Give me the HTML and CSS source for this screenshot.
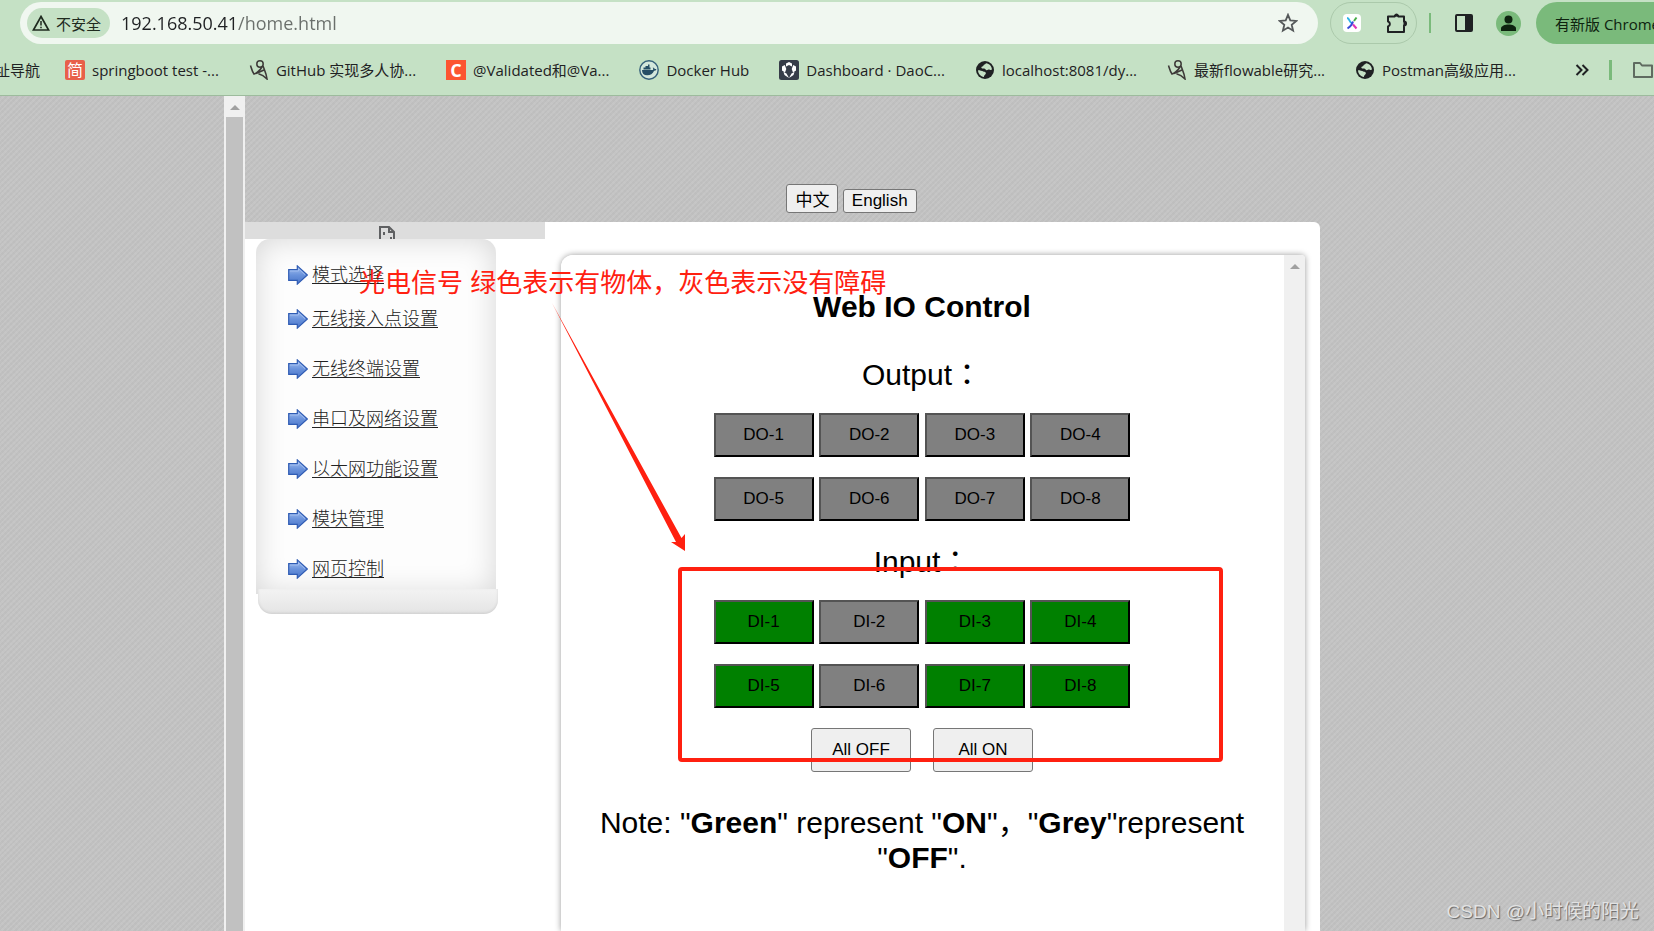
FILE: index.html
```html
<!DOCTYPE html>
<html lang="zh-CN">
<head>
    <meta charset="UTF-8">
    <meta name="viewport" content="width=device-width, initial-scale=1.0">
    <title>Web IO Control</title>
    <link rel="stylesheet" href="styles.css">
</head>
<body>

    <!-- Shared icons -->
    <svg class="sprite" aria-hidden="true">
        <defs>
            <linearGradient id="arrow-fill" x1="0" y1="0" x2="0" y2="1">
                <stop offset="0" stop-color="#a9c3f0"/>
                <stop offset="0.5" stop-color="#6a93dc"/>
                <stop offset="1" stop-color="#4a74c8"/>
            </linearGradient>
            <symbol id="arrow" viewBox="0 0 20 20">
                <path d="M.7 4.7h8.6V.9L19.3 10 9.3 19.1v-3.8H.7z" fill="url(#arrow-fill)" stroke="#2f5cb4" stroke-width="1.2"/>
                <path d="M2 6h8.5V3.6l6.6 6.2" fill="none" stroke="#9fbcf0" stroke-width="1"/>
            </symbol>
            <symbol id="globe" viewBox="0 0 20 20">
                <circle cx="10" cy="10" r="9" fill="#1f2123"/>
                <path d="M11 3.200c-.5 1.300-2.300 1-2.500 2.300-.2 1.200-2 .6-2.200 2-.1 1 1.500 1 2.700 1 1.600 0 1.400 1.700 2.700 1.700 1.200 0 1.900-.9 3-.5.8.3 1.500.2 2.300-.1-.2-3.300-2.600-6-6-6.400zM3 10.200c.1 3.500 2.600 6.300 6 6.800-.1-1.200.3-1.700 1-2.300.7-.7 1.200-1.300.6-2.200-.6-.8-1.500-.4-2.300-.9C7 10.800 5 10.200 3 10.200z" fill="#c5e1c5"/>
            </symbol>
            <symbol id="figure" viewBox="0 0 20 20">
                <circle cx="11" cy="4" r="3.200" fill="none" stroke="#3d3a38" stroke-width="1.500"/>
                <path d="M1.500 5.500c1 3 1.500 6 3.500 8.500 2-.5 6-3.500 8-7M14 6c1.500 4 3.500 8 4 13-2-2-4-4-8.500-5.200M7 13.500l8-3.500" fill="none" stroke="#3d3a38" stroke-width="1.600"/>
            </symbol>
        </defs>
    </svg>

    <!-- Browser bars -->
    <header class="browser">
        <div class="toolbar">
            <form class="address">
                <button type="button" class="security">
                    <svg width="18" height="16" viewBox="0 0 18 16"><path d="M9 1.500L16.600 15H1.400z" fill="none" stroke="#1f2a1f" stroke-width="1.700"/><path d="M9 6v4.500M9 11.800v1.500" stroke="#1f2a1f" stroke-width="1.500"/></svg>
                    不安全
                </button>
                <input class="url" type="text" value="192.168.50.41/home.html" aria-label="Address">
                <button type="button" class="icon-btn" aria-label="Bookmark">
                    <svg width="20" height="20" viewBox="0 0 20 20"><path d="M10 1.800l2.300 5.600 6 .5-4.600 3.900 1.400 5.900L10 14.600l-5.100 3.100 1.400-5.900L1.700 7.900l6-.5z" fill="none" stroke="#55595a" stroke-width="1.800"/></svg>
                </button>
            </form>
            <div class="extensions">
                <button class="icon-btn" aria-label="Extension">
                    <svg width="18" height="18" viewBox="0 0 18 18"><rect width="18" height="18" rx="4" fill="#fff"/><path d="M4 4c3 0 2 5 5 5" fill="none" stroke="#2bb3e8" stroke-width="2"/><path d="M13.500 3.500L11 7" stroke="#46ad46" stroke-width="2"/><path d="M10 7.500C9 11 7 13 4.500 14.500" fill="none" stroke="#3949d8" stroke-width="2"/><path d="M10 10.500l3.500 4" stroke="#e034b4" stroke-width="2"/></svg>
                </button>
                <button class="icon-btn" aria-label="Extensions">
                    <svg width="22" height="22" viewBox="0 0 22 22"><path d="M2 4.500h6.500a2.200 2.200 0 0 1 4 0H18V9.500a2 2 0 0 1 0 4V20H2v-5.500a2.600 2.600 0 0 0 0-5z" fill="none" stroke="#1f2123" stroke-width="2" stroke-linejoin="round"/><path d="M8.500 4a2 2 0 0 1 4 0zM18 9.500a2 2 0 0 1 0 4z" fill="#1f2123" stroke="#1f2123"/></svg>
                </button>
            </div>
            <span class="divider"></span>
            <button class="icon-btn panel-btn" aria-label="Side panel">
                <svg width="20" height="20" viewBox="0 0 20 20"><rect x="2" y="2" width="16" height="16" rx="1" fill="none" stroke="#1f2123" stroke-width="2"/><path d="M11 2h7v16h-7z" fill="#1f2123"/></svg>
            </button>
            <button class="icon-btn avatar" aria-label="Profile">
                <svg width="25" height="25" viewBox="0 0 25 25"><circle cx="12.500" cy="12.500" r="12.500" fill="#7aba7b"/><circle cx="12.500" cy="8.500" r="4" fill="#0e230f"/><path d="M5 20v-2.500c0-2.500 4-4 7.500-4s7.500 1.500 7.500 4V20z" fill="#0e230f"/></svg>
            </button>
            <button class="update">有新版 Chrome</button>
        </div>

        <nav class="bookmarks">
            <a href="#" class="cut">址导航</a>
            <a href="#"><span class="badge jian">简</span>springboot test -...</a>
            <a href="#"><svg width="20" height="20"><use href="#figure"/></svg>GitHub 实现多人协...</a>
            <a href="#"><span class="badge csdn">C</span>@Validated和@Va...</a>
            <a href="#"><svg width="20" height="20" viewBox="0 0 20 20"><circle cx="10" cy="10" r="9.200" fill="#d3e7dc" stroke="#35607a" stroke-width="1.400"/><path d="M3 10h11c.4-1 .2-1.800-.3-2.500 1.400 0 1.800.8 2 1.600.8-.2 1.300 0 1.700.3-.6 1-1.500 1.300-2.300 1.300-1.300 3.300-3.700 4.600-6.900 4.600C4.800 15.300 3 13.500 3 10zM4.500 7.500h7V9.500h-7zM6.500 6h4v1.500h-4zM9 4.500h1.500V6H9z" fill="#254e66"/></svg>Docker Hub</a>
            <a href="#"><svg width="20" height="20" viewBox="0 0 20 20"><rect width="20" height="20" rx="2.500" fill="#363c48"/><path d="M10 2l3 1.500v3l-3-1.500-3 1.500v-3zM3 6.500l2.800-1.500 1.500 4L6 12.500l-3-2zM17 6.500L14.200 5l-1.500 4 1.300 3.500 3-2zM4.500 12l3 1.500L10 18l2.500-4.500 3-1.500-1 3L10 18l-4.500-3z" fill="#fff"/></svg>Dashboard · DaoC...</a>
            <a href="#"><svg width="20" height="20"><use href="#globe"/></svg>localhost:8081/dy...</a>
            <a href="#"><svg width="20" height="20"><use href="#figure"/></svg>最新flowable研究...</a>
            <a href="#"><svg width="20" height="20"><use href="#globe"/></svg>Postman高级应用...</a>
            <span class="bookmarks-end">
                <button class="icon-btn" aria-label="More bookmarks">
                    <svg width="14" height="12" viewBox="0 0 14 12"><path d="M1.500 1l5 5-5 5M7.500 1l5 5-5 5" fill="none" stroke="#1f2123" stroke-width="2"/></svg>
                </button>
                <span class="divider"></span>
                <button class="icon-btn" aria-label="All bookmarks">
                    <svg width="22" height="18" viewBox="0 0 22 18"><path d="M2 2h6l2 2.500h10V16H2z" fill="none" stroke="#5f6b60" stroke-width="2" stroke-linejoin="round"/></svg>
                </button>
            </span>
        </nav>
    </header>

    <!-- Device page -->
    <div class="page">
        <div class="scrollbar outer">
            <span class="up"></span>
            <span class="thumb"></span>
        </div>

        <div class="frame">
            <div class="languages">
                <button>中文</button>
                <button>English</button>
            </div>

            <div class="content">
                <div class="side">
                    <div class="banner">
                        <svg width="16" height="14" viewBox="0 0 16 14"><path d="M1 14V1h9l5 5v8M10 1v5h5" fill="none" stroke="#5f6062" stroke-width="2"/><path d="M4 6h2v3H4zM11 11h2v2h-2z" fill="#5f6062"/></svg>
                    </div>
                    <ul class="menu">
                        <li><svg width="20" height="20"><use href="#arrow"/></svg><a href="#">模式选择</a></li>
                        <li><svg width="20" height="20"><use href="#arrow"/></svg><a href="#">无线接入点设置</a></li>
                        <li><svg width="20" height="20"><use href="#arrow"/></svg><a href="#">无线终端设置</a></li>
                        <li><svg width="20" height="20"><use href="#arrow"/></svg><a href="#">串口及网络设置</a></li>
                        <li><svg width="20" height="20"><use href="#arrow"/></svg><a href="#">以太网功能设置</a></li>
                        <li><svg width="20" height="20"><use href="#arrow"/></svg><a href="#">模块管理</a></li>
                        <li><svg width="20" height="20"><use href="#arrow"/></svg><a href="#">网页控制</a></li>
                    </ul>
                    <div class="menu-foot"></div>
                </div>

                <div class="panel">
                    <main class="control">
                        <h1>Web IO Control</h1>

                        <p class="label">Output<span class="mark" lang="zh-TW">：</span></p>
                        <div class="io-row">
                            <button class="io">DO-1</button>
                            <button class="io">DO-2</button>
                            <button class="io">DO-3</button>
                            <button class="io">DO-4</button>
                        </div>
                        <div class="io-row">
                            <button class="io">DO-5</button>
                            <button class="io">DO-6</button>
                            <button class="io">DO-7</button>
                            <button class="io">DO-8</button>
                        </div>

                        <p class="label">Input<span class="mark" lang="zh-TW">：</span></p>
                        <div class="io-row">
                            <button class="io on">DI-1</button>
                            <button class="io">DI-2</button>
                            <button class="io on">DI-3</button>
                            <button class="io on">DI-4</button>
                        </div>
                        <div class="io-row">
                            <button class="io on">DI-5</button>
                            <button class="io">DI-6</button>
                            <button class="io on">DI-7</button>
                            <button class="io on">DI-8</button>
                        </div>
                        <div class="io-row all">
                            <button>All OFF</button>
                            <button>All ON</button>
                        </div>

                        <p class="note">Note: "<b>Green</b>" represent "<b>ON</b>"，"<b>Grey</b>"represent "<b>OFF</b>".</p>
                    </main>
                    <div class="scrollbar">
                        <span class="up"></span>
                    </div>
                </div>
            </div>
        </div>

        <!-- Annotations -->
        <p class="remark">光电信号 绿色表示有物体，灰色表示没有障碍</p>
        <svg class="pointer" width="136" height="250" viewBox="0 0 136 250"><path d="M0 0L124 239l-5 0 14 9V231l-3.500 4L103 187z" fill="#ff2010"/></svg>
        <div class="highlight"></div>
        <p class="watermark">CSDN @小时候的阳光</p>
    </div>

</body>
</html>
```

FILE: styles.css
```css
* {
    box-sizing: border-box;
}
body {
    display: flex;
    flex-direction: column;
    height: 100vh;
    margin: 0;
    overflow: hidden;
    font-family: "Liberation Sans", "Noto Sans CJK SC", sans-serif;
}
p, h1, ul {
    margin: 0;
    padding: 0;
}
button {
    font-family: inherit;
    color: #000;
}
.sprite {
    position: absolute;
    width: 0;
    height: 0;
}

/* Browser bars */
.browser {
    flex: none;
    background-color: #c5e1c5;
    border-bottom: 1px solid #9dbb9d;
    font-family: "Open Sans", "Noto Sans CJK SC", sans-serif;
    overflow: hidden;
}
.toolbar {
    display: flex;
    align-items: center;
    height: 46px;
    padding: 2px 0 2px 20px;
}
.icon-btn {
    display: flex;
    flex: none;
    padding: 0;
    border: none;
    background: none;
}
.address {
    display: flex;
    flex: 1;
    align-items: center;
    height: 42px;
    padding: 0 20px 0 7px;
    border-radius: 21px;
    background-color: #f0f7f0;
}
.security {
    display: flex;
    align-items: center;
    gap: 6px;
    height: 30px;
    padding: 0 9px 0 5px;
    border: none;
    border-radius: 15px;
    background-color: #c5e1c5;
    font-size: 15px;
    color: #1f2a1f;
}
.url {
    flex: 1;
    min-width: 0;
    margin-left: 11px;
    padding: 0;
    border: none;
    font-family: inherit;
    font-size: 18px;
    color: #1f2123;
    background: linear-gradient(90deg, #1f2123 115px, #6a6f6b 115px);
    -webkit-background-clip: text;
    background-clip: text;
    -webkit-text-fill-color: transparent;
}
.extensions {
    display: flex;
    align-items: center;
    gap: 25px;
    height: 42px;
    margin-left: 12px;
    padding: 0 8px 0 12px;
    border: 1px solid #abc9ab;
    border-radius: 21px;
}
.divider {
    width: 3px;
    height: 20px;
    background-color: #7aba7b;
}
.toolbar .divider {
    width: 2px;
    margin: 0 23px 0 12px;
}
.avatar {
    margin: 0 15px 0 22px;
}
.update {
    flex: none;
    width: 118px;
    height: 42px;
    padding: 0 0 0 19px;
    border: none;
    border-radius: 21px 0 0 21px;
    background-color: #7aba7b;
    font-size: 15px;
    color: #0e230f;
    text-align: left;
    white-space: nowrap;
    overflow: hidden;
}
.bookmarks {
    display: flex;
    align-items: center;
    gap: 30px;
    height: 49px;
    padding-bottom: 2px;
}
.bookmarks a {
    display: flex;
    flex: none;
    align-items: center;
    gap: 7px;
    font-size: 15px;
    color: #1f2123;
    text-decoration: none;
    white-space: nowrap;
}
.bookmarks .cut {
    margin: 0 -5px;
}
.badge {
    width: 20px;
    height: 20px;
    color: #fff;
    line-height: 20px;
    text-align: center;
}
.jian {
    border-radius: 2px;
    background-color: #e8604a;
    font-size: 16px;
}
.csdn {
    background-color: #fc5531;
    font-size: 18px;
    font-weight: bold;
}
.bookmarks-end {
    display: flex;
    align-items: center;
    gap: 20px;
    margin-left: auto;
}

/* Page */
.page {
    position: relative;
    display: grid;
    grid-template-columns: 21px minmax(0, 1075px);
    flex: 1;
    min-height: 0;
    padding-left: 224px;
    overflow: hidden;
    background-color: #c6c6c6;
    background-image:
        repeating-linear-gradient(135deg, rgba(0, 0, 0, 0.03) 0 2px, transparent 2px 4px),
        repeating-linear-gradient(45deg, rgba(0, 0, 0, 0.01) 0 2px, transparent 2px 4px);
}
.scrollbar {
    display: flex;
    flex: none;
    flex-direction: column;
    align-items: center;
    width: 21px;
    background-color: #f0f0f0;
}
.up {
    margin: 9px 0 7px;
    border: 5px solid transparent;
    border-top: none;
    border-bottom-color: #a0a0a0;
}
.thumb {
    flex: 1;
    width: 17px;
    background-color: #c1c1c1;
}
.frame {
    display: flex;
    flex-direction: column;
    min-height: 0;
}
.languages {
    height: 126px;
    padding: 88px 0 0 138px;
    font-size: 16px;
    text-align: center;
}
.languages button {
    padding: 1px 8px;
    border: 1px solid #767676;
    border-radius: 3px;
    background-color: #efefef;
    font-size: 17px;
}
.content {
    display: flex;
    flex: 1;
    min-height: 0;
    padding-right: 15px;
    border-radius: 0 6px 0 0;
    background-color: #fff;
}
.side {
    width: 300px;
}
.banner {
    height: 17px;
    padding-top: 4px;
    background-color: #ddd;
    overflow: hidden;
}
.banner svg {
    display: block;
    margin-left: 134px;
}
.menu {
    width: 240px;
    margin-left: 11px;
    padding: 17px 0 0 32px;
    border-radius: 14px 14px 0 0;
    background-color: #fdfdfd;
    box-shadow: inset 0 0 30px rgba(0, 0, 0, 0.16);
    list-style: none;
}
.menu li {
    display: flex;
    align-items: center;
    gap: 4px;
    height: 50px;
}
.menu li:first-child {
    height: 38px;
}
.menu a {
    color: #222;
    font-size: 18px;
    font-weight: 300;
    line-height: 25px;
    text-underline-offset: 2px;
}
.menu-foot {
    position: relative;
    width: 240px;
    height: 25px;
    margin: -5px 0 0 13px;
    border-radius: 0 0 14px 14px;
    background: linear-gradient(#f3f3f3, #e4e4e4);
    box-shadow: inset 0 -1px 3px rgba(0, 0, 0, 0.1);
}

/* IO panel */
.panel {
    display: flex;
    flex: 1;
    margin: 33px 0 0 16px;
    border-radius: 12px 4px 0 0;
    box-shadow: 0 0 6px rgba(0, 0, 0, 0.4);
    overflow: hidden;
}
.control {
    flex: 1;
    padding: 34px 31px 0 30px;
    background-color: #fff;
    font-size: 30px;
    text-align: center;
}
h1 {
    font-size: 30px;
    line-height: 36px;
}
.label {
    margin: 32px 0 20px;
    line-height: 36px;
}
.io-row + .label {
    margin-top: 23px;
}
.mark {
    font-family: "Noto Sans CJK TC", sans-serif;
    line-height: 0;
}
.io-row {
    height: 44px;
    margin-bottom: 20px;
    font-size: 20px;
}
.io-row button {
    width: 100px;
    height: 44px;
    vertical-align: top;
    font-size: 17px;
}
.io {
    border: 2px outset #000;
    background-color: gray;
}
.io.on {
    background-color: green;
}
.all {
    display: flex;
    justify-content: center;
    gap: 22px;
}
.all button {
    border: 1px solid #767676;
    border-radius: 3px;
    background-color: #efefef;
}
.note {
    margin-top: 33px;
    line-height: 35px;
}

/* Annotations */
.remark {
    position: absolute;
    top: 169px;
    left: 359px;
    font-size: 26px;
    line-height: 36px;
    color: #ff2010;
}
.pointer {
    position: absolute;
    top: 207px;
    left: 552px;
}
.highlight {
    position: absolute;
    top: 471px;
    left: 678px;
    width: 545px;
    height: 195px;
    border: 4px solid #ff2010;
    border-radius: 4px;
}
.watermark {
    position: absolute;
    right: 15px;
    bottom: 6px;
    font-size: 19px;
    line-height: 26px;
    color: #e2e2e2;
    text-shadow: 1px 1px 1px #666;
}
```
